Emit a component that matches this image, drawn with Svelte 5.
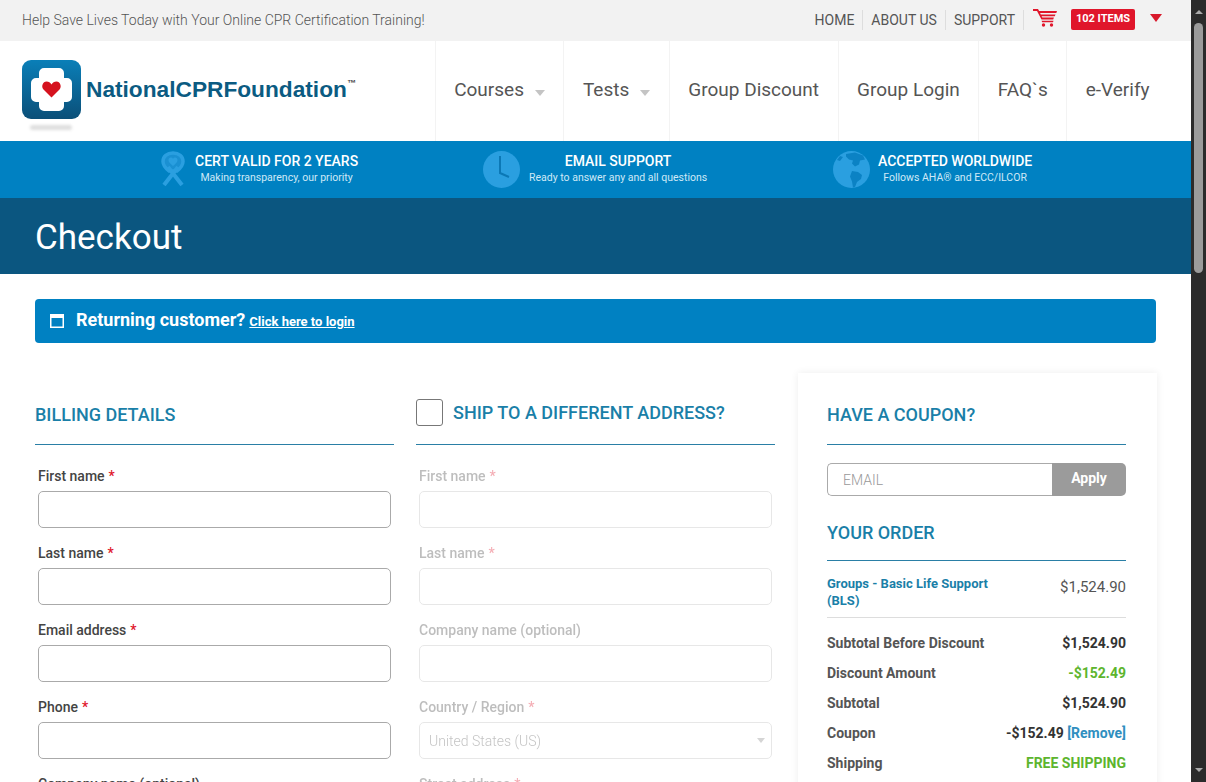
<script>
	const topLinks = ['HOME', 'ABOUT US', 'SUPPORT'];
	const nav = [
		{ label: 'Courses', caret: true },
		{ label: 'Tests', caret: true },
		{ label: 'Group Discount' },
		{ label: 'Group Login' },
		{ label: 'FAQ`s' },
		{ label: 'e-Verify' }
	];
	const billing = [
		{ label: 'First name', req: true },
		{ label: 'Last name', req: true },
		{ label: 'Email address', req: true },
		{ label: 'Phone', req: true },
		{ label: 'Company name (optional)' }
	];
	const shipping = [
		{ label: 'First name', req: true },
		{ label: 'Last name', req: true },
		{ label: 'Company name (optional)' },
		{ label: 'Country / Region', req: true, select: 'United States (US)' },
		{ label: 'Street address', req: true }
	];
</script>

<div class="window">
	<div class="page">
		<div class="topbar">
			<span class="tagline">Help Save Lives Today with Your Online CPR Certification Training!</span>
			<div class="top-right">
				{#each topLinks as link}
					<a class="top-link" href="#top">{link}</a>
				{/each}
				<svg class="cart" width="24" height="18" viewBox="0 0 24 18" fill="#e0162b">
					<path d="M0 0h5l1.100 2H24l-.7 2H7.100l.7 1.400h14.700l-.7 1.800H8.600l.7 1.400h11.600l-.7 1.800H8.500L4 2H0z" />
					<path d="M8.500 11.800h12l-.5 1.400H9.200z" />
					<circle cx="10.500" cy="16" r="1.700" />
					<circle cx="18.500" cy="16" r="1.700" />
				</svg>
				<span class="items">102 ITEMS</span>
				<span class="tri"></span>
			</div>
		</div>

		<header class="header">
			<div class="logo">
				<div class="logo-mark">
					<svg width="59" height="59" viewBox="0 0 59 59">
						<defs>
							<linearGradient id="logoBg" x1="0" y1="0" x2="0" y2="1">
								<stop offset="0" stop-color="#0a7fb8" />
								<stop offset="1" stop-color="#0b4f78" />
							</linearGradient>
						</defs>
						<rect width="59" height="59" rx="9" fill="url(#logoBg)" />
						<path d="M22 8h15a5 5 0 0 1 5 5v5h3a5 5 0 0 1 5 5v14a5 5 0 0 1-5 5h-3v4a5 5 0 0 1-5 5H22a5 5 0 0 1-5-5v-4h-3a5 5 0 0 1-5-5V23a5 5 0 0 1 5-5h3v-5a5 5 0 0 1 5-5z" fill="#fff" />
						<path d="M29.500 37.500 21.500 29.500c-2.700-3-.6-8 3-8 2.200 0 3.900 1.100 5 2.900 1.100-1.800 2.800-2.900 5-2.900 3.600 0 5.700 5 3 8z" fill="#d5121e" />
					</svg>
					<span class="logo-shadow"></span>
				</div>
				<span class="logo-text">NationalCPRFoundation<sup>™</sup></span>
			</div>
			<nav class="nav">
				{#each nav as item}
					<a class="nav-item" href="#top">
						{item.label}
						{#if item.caret}<span class="caret"></span>{/if}
					</a>
				{/each}
			</nav>
		</header>

		<div class="features">
			<div class="feature f1">
				<svg width="30" height="36" viewBox="0 0 30 36" fill="none" stroke="#2a9fe0" stroke-width="4">
					<path d="M15 2c6 0 10 3.500 10 8.500 0 4-3 7-6 9.500H11C8 17.500 5 14.500 5 10.500 5 5.500 9 2 15 2z" fill="#1a90d2" stroke-width="3.500" />
					<path d="M15 15c-3-2.500-4.500-4-4.500-6 0-1.500 1-2.500 2.400-2.500.9 0 1.600.4 2.100 1.200.5-.8 1.200-1.200 2.100-1.200 1.400 0 2.400 1 2.400 2.500 0 2-1.500 3.500-4.500 6z" fill="#2a9fe0" stroke="none" />
					<path d="M10 16l14 18M20 16 6 34" />
				</svg>
				<div class="feature-text">
					<strong>CERT VALID FOR 2 YEARS</strong>
					<span>Making transparency, our priority</span>
				</div>
			</div>
			<div class="feature f2">
				<svg width="37" height="37" viewBox="0 0 37 37">
					<circle cx="18.500" cy="18.500" r="18.500" fill="#2a9fe0" />
					<path d="M17 5v17l9 4" fill="none" stroke="#0b78b6" stroke-width="2" />
				</svg>
				<div class="feature-text">
					<strong>EMAIL SUPPORT</strong>
					<span>Ready to answer any and all questions</span>
				</div>
			</div>
			<div class="feature f3">
				<svg width="37" height="37" viewBox="0 0 37 37">
					<circle cx="18.500" cy="18.500" r="18.500" fill="#2a9fe0" />
					<path d="M13 3l9-1.500 8 3 2 4-5 1-1 4-4 2-3-3 1-3-4-1-3-3zM7 5 10 6 7 10 4 9z" fill="#0b82c4" />
					<path d="M19 20l6 1 4 3-1 4-4 3-2 5-2 .5-1-6-2-5z" fill="#0b82c4" />
				</svg>
				<div class="feature-text">
					<strong>ACCEPTED WORLDWIDE</strong>
					<span>Follows AHA® and ECC/ILCOR</span>
				</div>
			</div>
		</div>

		<div class="title-band"><h1>Checkout</h1></div>

		<div class="content">
			<div class="notice">
				<svg width="14" height="14" viewBox="0 0 14 14">
					<path d="M0 0h14v14H0z" fill="#fff" />
					<path d="M1.500 4h11v8.500h-11z" fill="#0081c2" />
				</svg>
				<span class="notice-q">Returning customer?</span>
				<a href="#top">Click here to login</a>
			</div>

			<div class="columns">
				<section class="col">
					<h2 class="heading">BILLING DETAILS</h2>
					{#each billing as field}
						<div class="field">
							<label>{field.label}{#if field.req}<b>*</b>{/if}</label>
							<div class="input"></div>
						</div>
					{/each}
				</section>

				<section class="col">
					<h2 class="heading ship"><span class="check"></span>SHIP TO A DIFFERENT ADDRESS?</h2>
					<div class="disabled">
						{#each shipping as field}
							<div class="field">
								<label>{field.label}{#if field.req}<b>*</b>{/if}</label>
								<div class="input">
									{#if field.select}
										<span class="select-val">{field.select}</span>
										<span class="select-arrow"></span>
									{/if}
								</div>
							</div>
						{/each}
					</div>
				</section>

				<aside class="card">
					<h2 class="heading">HAVE A COUPON?</h2>
					<div class="coupon">
						<span class="coupon-input">EMAIL</span>
						<span class="apply">Apply</span>
					</div>
					<h2 class="heading order-head">YOUR ORDER</h2>
					<div class="order-line">
						<a href="#top">Groups - Basic Life Support (BLS)</a>
						<span>$1,524.90</span>
					</div>
					<div class="rows">
						<div class="row"><span>Subtotal Before Discount</span><strong>$1,524.90</strong></div>
						<div class="row"><span>Discount Amount</span><strong class="green">-$152.49</strong></div>
						<div class="row"><span>Subtotal</span><strong>$1,524.90</strong></div>
						<div class="row"><span>Coupon</span><strong>-$152.49 <a href="#top">[Remove]</a></strong></div>
						<div class="row"><span>Shipping</span><strong class="green">FREE SHIPPING</strong></div>
					</div>
				</aside>
			</div>
		</div>
	</div>

	<div class="scrollbar">
		<span class="arrow up"></span>
		<div class="track"><div class="thumb"></div></div>
		<span class="arrow down"></span>
	</div>
</div>

<style>
	:global(body) {
		margin: 0;
		background: #fff;
	}

	.window {
		display: flex;
		height: 782px;
		overflow: hidden;
		font-family: Roboto, 'Liberation Sans', sans-serif;
		color: #444;
	}

	.page {
		flex: 1;
		min-width: 0;
		overflow: hidden;
	}

	a {
		color: inherit;
		text-decoration: none;
	}

	.topbar {
		display: flex;
		align-items: center;
		justify-content: space-between;
		height: 41px;
		padding: 0 29px 2px 22px;
		box-sizing: border-box;
		background: #f2f2f2;
	}

	.tagline {
		font-size: 14px;
		font-weight: 300;
		color: #555;
	}

	.top-right {
		display: flex;
		align-items: center;
	}

	.top-link {
		padding: 0 8px;
		font-size: 14px;
		line-height: 20px;
		color: #555;
		border-right: 1px solid #ddd;
	}

	.cart {
		margin: -3px 14px 0 9px;
	}

	.items {
		width: 64px;
		height: 21px;
		line-height: 20px;
		text-align: center;
		font-size: 11px;
		font-weight: 700;
		color: #fff;
		background: #e0162b;
		border-radius: 2px;
	}

	.tri {
		margin: -3px 0 0 15px;
		border-left: 6px solid transparent;
		border-right: 6px solid transparent;
		border-top: 8px solid #d81a2c;
	}

	.header {
		display: flex;
		justify-content: space-between;
		height: 100px;
		padding: 0 23px 0 22px;
	}

	.logo {
		display: flex;
		align-items: flex-start;
		padding-top: 19px;
	}

	.logo-mark {
		position: relative;
		height: 59px;
	}

	.logo-shadow {
		position: absolute;
		left: 8px;
		top: 65px;
		width: 42px;
		height: 5px;
		background: #dedede;
		border-radius: 3px;
		filter: blur(1.500px);
	}

	.logo-text {
		margin: 14px 0 0 5px;
		font-family: 'Liberation Sans', Arial, sans-serif;
		font-size: 22.700px;
		font-weight: 700;
		line-height: 30px;
		color: #0b5b82;
	}

	.logo-text sup {
		font-size: 9px;
		line-height: 0;
		vertical-align: 11px;
		color: #444;
	}

	.nav {
		display: flex;
		height: 100px;
	}

	.nav-item {
		display: flex;
		align-items: center;
		padding: 0 18.500px 3px;
		box-sizing: border-box;
		font-size: 19px;
		color: #555;
		border-left: 1px solid #f3f3f3;
		white-space: nowrap;
	}

	.caret {
		margin: 6px 0 0 11px;
		border-left: 5.500px solid transparent;
		border-right: 5.500px solid transparent;
		border-top: 6px solid #c4c4c4;
	}

	.features {
		position: relative;
		height: 57px;
		background: #0081c2;
	}

	.feature {
		position: absolute;
		top: 9px;
		display: flex;
		align-items: center;
		gap: 7px;
		height: 38px;
	}

	.f1 { left: 158px; }
	.f2 { left: 483px; gap: 9px; }
	.f3 { left: 833px; gap: 8px; }

	.feature-text {
		display: flex;
		flex-direction: column;
		align-items: center;
		color: #fff;
	}

	.feature-text strong {
		margin: -1px 0 1px;
		font-size: 14px;
		font-weight: 500;
		line-height: 18px;
	}

	.feature-text span {
		font-size: 10.500px;
		line-height: 14px;
		color: #cfe9f7;
	}

	.title-band {
		display: flex;
		align-items: center;
		height: 76px;
		padding: 2px 0 0 35px;
		box-sizing: border-box;
		background: #0b5680;
	}

	h1 {
		margin: 0;
		font-size: 35px;
		font-weight: 400;
		color: #fff;
	}

	.content {
		padding: 25px 35px 0;
	}

	.notice {
		display: flex;
		align-items: center;
		height: 44px;
		padding-left: 15px;
		color: #fff;
		background: #0081c2;
		border-radius: 4px;
	}

	.notice-q {
		margin: -3px 4px 0 12px;
		font-size: 18px;
		font-weight: 700;
	}

	.notice a {
		font-size: 13px;
		font-weight: 700;
		text-decoration: underline;
	}

	.columns {
		display: grid;
		grid-template-columns: 359px 359px 359px;
		column-gap: 22px;
		margin-top: 30px;
	}

	.heading {
		display: flex;
		align-items: center;
		height: 72px;
		margin: 0;
		padding-top: 12px;
		font-size: 18px;
		font-weight: 500;
		color: #1a7fa8;
		border-bottom: 1px solid #2a7fa6;
		box-sizing: border-box;
	}

	.ship {
		padding-top: 8px;
	}

	.check {
		width: 27px;
		height: 27px;
		margin-right: 10px;
		border: 1px solid #777;
		border-radius: 3px;
		box-sizing: border-box;
	}

	.field {
		padding: 0 3px;
		height: 77px;
	}

	.field:first-of-type {
		padding-top: 23px;
	}

	.field label {
		display: block;
		font-size: 14px;
		font-weight: 500;
		line-height: 17px;
		margin-bottom: 6px;
	}

	.field label b {
		margin-left: 4px;
		color: #e0162b;
		font-weight: 500;
	}

	.input {
		display: flex;
		align-items: center;
		justify-content: space-between;
		height: 37px;
		border: 1px solid #aaa;
		border-radius: 5px;
		box-sizing: border-box;
		background: #fff;
	}

	.disabled {
		opacity: 0.35;
	}

	.disabled .input {
		border-color: #bbb;
	}

	.select-val {
		padding-left: 9px;
		font-size: 14px;
		font-weight: 300;
		color: #555;
	}

	.select-arrow {
		margin-right: 6px;
		border-left: 4px solid transparent;
		border-right: 4px solid transparent;
		border-top: 5px solid #888;
	}

	.card {
		margin: 0 -1px 0 1px;
		padding: 0 31px 0 29px;
		height: 500px;
		box-sizing: border-box;
		box-shadow: 0 0 8px rgba(0, 0, 0, 0.07);
	}

	.coupon {
		display: flex;
		height: 33px;
		margin-top: 18px;
	}

	.coupon-input {
		flex: 1;
		padding-left: 15px;
		line-height: 32px;
		font-size: 14px;
		font-weight: 300;
		color: #999;
		border: 1px solid #aaa;
		border-right: 0;
		border-radius: 5px 0 0 5px;
	}

	.apply {
		width: 74px;
		text-align: center;
		line-height: 31px;
		font-size: 14px;
		font-weight: 700;
		color: #fff;
		background: #9b9b9b;
		border-radius: 0 5px 5px 0;
	}

	.order-head {
		height: 65px;
		padding-top: 9px;
	}

	.order-line {
		display: flex;
		align-items: center;
		justify-content: space-between;
		height: 57px;
		border-bottom: 1px solid #ddd;
		box-sizing: border-box;
		font-size: 15px;
		color: #555;
	}

	.order-line a {
		width: 170px;
		margin-top: 5px;
		font-size: 13px;
		font-weight: 700;
		line-height: 17px;
		color: #1a7fa8;
	}

	.order-line span {
		margin-bottom: 5px;
	}

	.rows {
		margin-top: 10px;
	}

	.row {
		display: flex;
		align-items: center;
		justify-content: space-between;
		height: 30px;
		font-size: 14px;
		font-weight: 700;
		color: #555;
	}

	.row strong {
		font-weight: 700;
		color: #333;
	}

	.row strong a {
		color: #2f8fc0;
	}

	.row strong.green {
		color: #5db52e;
	}

	.scrollbar {
		display: flex;
		flex-direction: column;
		align-items: center;
		flex: 0 0 15px;
		background: #2b2b2b;
	}

	.arrow {
		flex: 0 0 auto;
		border-left: 4px solid transparent;
		border-right: 4px solid transparent;
	}

	.arrow.up {
		margin: 10px 0 7px;
		border-bottom: 4px solid #aaa;
	}

	.arrow.down {
		margin: 6px 0 10px;
		border-top: 4px solid #aaa;
	}

	.track {
		flex: 1;
		width: 100%;
	}

	.thumb {
		width: 9px;
		height: 250px;
		margin: 2px 3px 0;
		background: #9b9b9b;
		border-radius: 5px;
	}
</style>
